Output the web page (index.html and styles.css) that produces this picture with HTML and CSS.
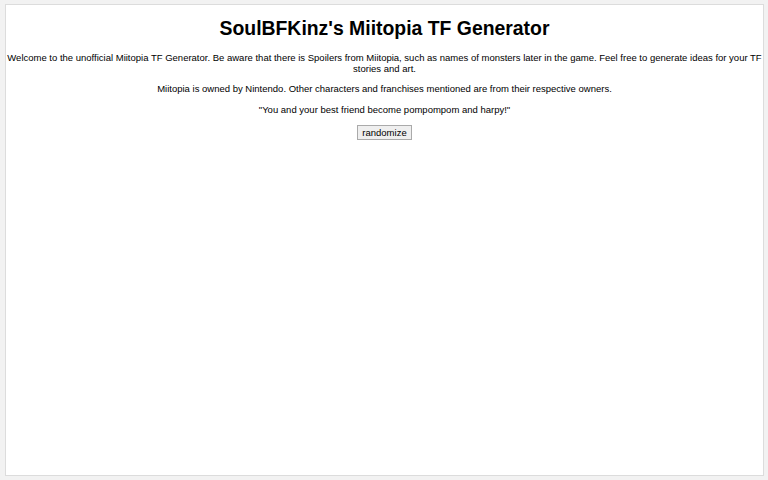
FILE: index.html
```html
<!DOCTYPE html>
<html lang="en">
<head>
  <meta charset="UTF-8" />
  <title>SoulBFKinz's Miitopia TF Generator</title>
  <link rel="stylesheet" href="styles.css">
</head>
<body>
  <div class="page">
    <h1>SoulBFKinz's Miitopia TF Generator</h1>
    <p>Welcome to the unofficial Miitopia TF Generator. Be aware that there is Spoilers from Miitopia, such as names of monsters later in the game. Feel free to generate ideas for your TF stories and art.</p>
    <p>Miitopia is owned by Nintendo. Other characters and franchises mentioned are from their respective owners.</p>
    <p id="result">"You and your best friend become pompompom and harpy!"</p>
    <button onclick="randomize()">randomize</button>
  </div>

  <script>
    // monsters to pick from
    const monsters = ["pompompom", "harpy", "slime", "pumpkin", "mummy", "gremlin", "golem", "dragon"];

    function pick() {
      return monsters[Math.floor(Math.random() * monsters.length)];
    }

    function randomize() {
      document.getElementById("result").textContent =
        '"You and your best friend become ' + pick() + ' and ' + pick() + '!"';
    }
  </script>
</body>
</html>
```

FILE: styles.css
```css
html, body {
  height: 100%;
}
body {
  margin: 0;
  padding: 4px 4px 4px 5px;
  box-sizing: border-box;
  background: #f2f2f2;
  font-family: "Liberation Sans", Arial, sans-serif;
  color: #000;
}
.page {
  box-sizing: border-box;
  height: 100%;
  background: #fff;
  border: 1px solid #dcdcdc;
  padding: 0 1px;
  text-align: center;
}
h1 {
  margin: 0;
  padding: 12px 0 12.5px;
  font-size: 19.4px;
  line-height: 22px;
}
p {
  margin: 0 0 9.5px;
  font-size: 9.5px;
  line-height: 11px;
}
#result {
  margin-bottom: 7.5px;
}
button {
  font-family: "Liberation Sans", Arial, sans-serif;
  font-size: 9.5px;
  line-height: 11px;
  padding: 1px 4px;
  background: #efefef;
  border: 1px solid #aaa;
  border-radius: 0;
  color: #000;
}
```
